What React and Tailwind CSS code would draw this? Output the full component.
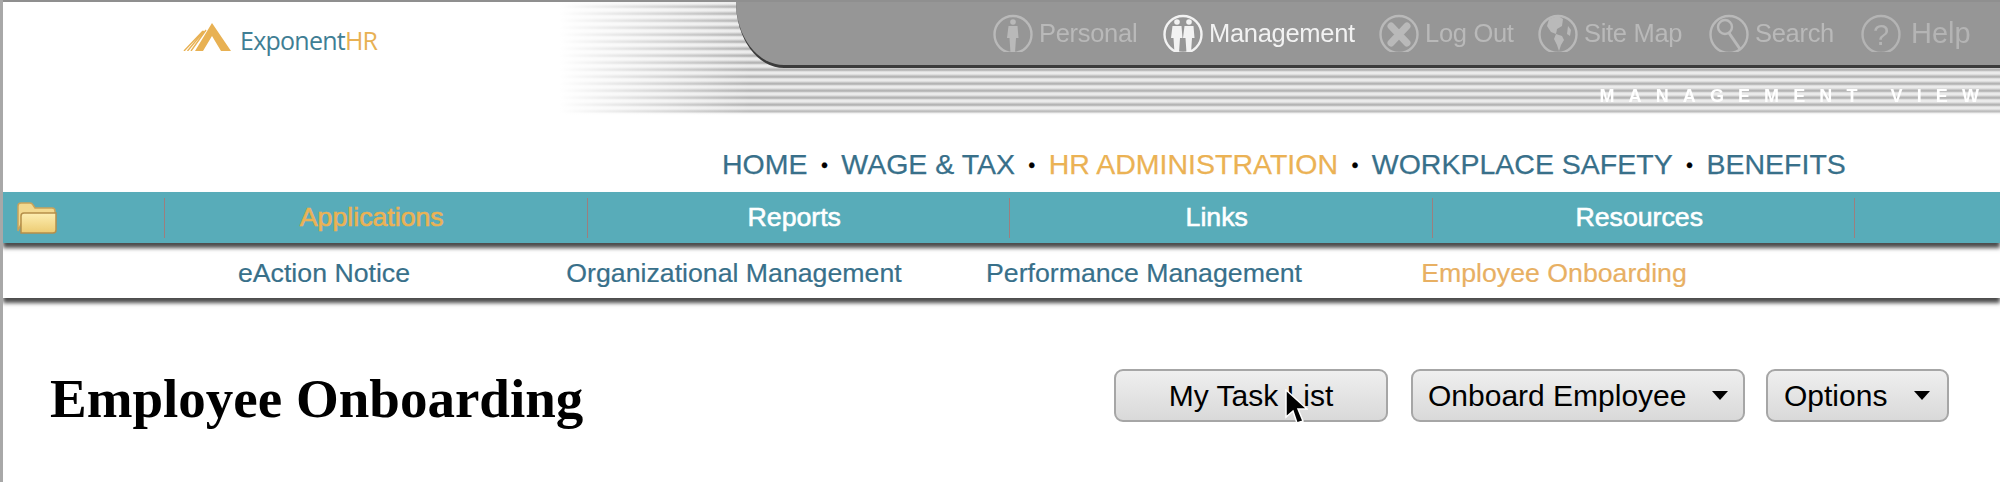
import React from 'react';

const PersonGlyph = ({ x = 20 }) => (
  <g transform={`translate(${x} 0)`} fill="currentColor" stroke="none">
    <circle cx="0" cy="8" r="2.8" />
    <path d="M-4.5 12h9l1 12h-2.5l-1 15h-4.500l-1-15h-2.500z" />
  </g>
);

const NavIcon = ({ type }) => (
  <svg viewBox="0 0 40 38" className="w-[40px] h-[38px] shrink-0">
    <circle cx="20" cy="20.500" r="18.500" fill="none" stroke="currentColor" strokeWidth="2.4" />
    {type === 'personal' && <PersonGlyph />}
    {type === 'management' && (
      <>
        <PersonGlyph x={14} />
        <PersonGlyph x={26} />
      </>
    )}
    {type === 'logout' && <path d="M12 12l16 17M28 12L12 29" stroke="currentColor" strokeWidth="7" strokeLinecap="round" />}
    {type === 'sitemap' && (
      <path
        fill="currentColor"
        d="M11 5l9-3 5 3-1 7-5 3-1 5-5-2-4-6zM18 20l6 2 2 4-3 5-2 6-2-6-3-6zM30 12l3 4-1 6-3-2z"
      />
    )}
    {type === 'search' && (
      <>
        <circle cx="16" cy="13" r="7" fill="none" stroke="currentColor" strokeWidth="2.4" />
        <path d="M20 19l11 16" stroke="currentColor" strokeWidth="3" />
      </>
    )}
    {type === 'help' && (
      <text x="20" y="31" textAnchor="middle" fontSize="29" fontFamily="'Liberation Sans', sans-serif" fill="currentColor">
        ?
      </text>
    )}
  </svg>
);

const FolderIcon = () => (
  <svg viewBox="0 0 40 32" className="w-[40px] h-[32px] shrink-0">
    <defs>
      <linearGradient id="folderFront" x1="0" y1="0" x2="0" y2="1">
        <stop offset="0" stopColor="#fdeeb2" />
        <stop offset="1" stopColor="#eccb72" />
      </linearGradient>
    </defs>
    <path d="M1 29V4q0-3 3-3h9q2 0 3 2l2 3h17q3 0 3 3v4H8z" fill="#f3d98f" stroke="#c9a35a" strokeWidth="1.5" />
    <path d="M4 31h32q3 0 3-3V11H7q-3 0-3 3z" fill="url(#folderFront)" stroke="#b58f4a" strokeWidth="1.5" />
  </svg>
);

const topLinks = [
  { label: 'Personal', type: 'personal', width: 'w-[170px]', color: 'text-[#b9b9b9]' },
  { label: 'Management', type: 'management', width: 'w-[216px]', color: 'text-[#f2f2f2]' },
  { label: 'Log Out', type: 'logout', width: 'w-[159px]', color: 'text-[#b9b9b9]' },
  { label: 'Site Map', type: 'sitemap', width: 'w-[171px]', color: 'text-[#b9b9b9]' },
  { label: 'Search', type: 'search', width: 'w-[152px]', color: 'text-[#b9b9b9]' },
];

const mainNav = [
  { label: 'HOME' },
  { label: 'WAGE & TAX' },
  { label: 'HR ADMINISTRATION', active: true },
  { label: 'WORKPLACE SAFETY' },
  { label: 'BENEFITS' },
];

const tabs = ['Applications', 'Reports', 'Links', 'Resources'];
const subItems = ['eAction Notice', 'Organizational Management', 'Performance Management', 'Employee Onboarding'];

const Caret = () => (
  <span className="w-0 h-0 border-x-[8px] border-x-transparent border-t-[9px] border-t-black" />
);

const Button = ({ width, children, className }) => (
  <button
    className={`h-[53px] flex items-center rounded-[9px] border-2 border-[#a6a6a6] bg-gradient-to-b from-[#efefef] to-[#d9d9d9] text-[30px] text-black ${width} ${className}`}
  >
    {children}
  </button>
);

const App = () => {
  return (
    <div className="relative w-[2000px] h-[482px] overflow-hidden bg-white border-l-[3px] border-[#a8a8a8] font-['Liberation_Sans',Arial,sans-serif]">
      {/* header */}
      <div className="flex h-[115px] border-t-2 border-[#8f8f8f]">
        <div className="w-[557px] flex items-start pl-[180px] pt-[21px] gap-[9px]">
          <svg viewBox="0 0 48 28" className="w-[48px] h-[28px] shrink-0">
            <path d="M29 0L48 28H38L29 13 20 28H12z" fill="#e8b153" />
            <path d="M1 28L20 8M4.500 28L21 8M8 28L23 7" stroke="#e8b153" strokeWidth="1.4" fill="none" />
          </svg>
          <span className="text-[25px] leading-[28px] mt-[3px] tracking-[-0.75px] text-[#3f7e94] font-['Open_Sans',sans-serif]">
            Exponent<span className="text-[#e8b153]">HR</span>
          </span>
        </div>
        <div className="flex-1 flex flex-col bg-[linear-gradient(to_right,#fff,rgba(255,255,255,0)_190px),linear-gradient(to_bottom,rgba(255,255,255,0)_109px,#fff_113px),repeating-linear-gradient(to_bottom,#ebebeb_0px,#ebebeb_2px,#d0d0d0_3px,#ababab_5px,#d0d0d0_6px,#ebebeb_7px)]">
          <div className="ml-[176px] h-[66px] flex items-start pl-[257px] pt-[12px] bg-[#969696] border-b-[3px] border-[#3b3b3b] rounded-bl-[48px_66px] blur-[0.6px]">
            {topLinks.map((link) => (
              <div key={link.label} className={`flex items-center gap-[6px] ${link.width} ${link.color}`}>
                <NavIcon type={link.type} />
                <span className="text-[25.5px] leading-[38px] tracking-[-0.3px] whitespace-nowrap">{link.label}</span>
              </div>
            ))}
            <div className="flex items-center gap-[10px] text-[#b4b4b4]">
              <NavIcon type="help" />
              <span className="text-[29px] leading-[36px] whitespace-nowrap">Help</span>
            </div>
          </div>
          <div className="flex justify-end pr-[7px] pt-[18px] text-[18px] leading-[20px] font-bold tracking-[14.1px] text-white blur-[0.3px] whitespace-nowrap">
            MANAGEMENT VIEW
          </div>
        </div>
      </div>

      {/* main nav */}
      <div className="flex items-center h-[77px] pl-[719px] pt-[22px] text-[28.5px] text-[#38708a] [-webkit-text-stroke:0.25px_currentColor] whitespace-nowrap">
        {mainNav.map((item, i) => (
          <React.Fragment key={item.label}>
            {i > 0 && <span className="mx-[13.4px] text-black text-[20px]">•</span>}
            <span className={item.active ? 'text-[#ebb254]' : ''}>{item.label}</span>
          </React.Fragment>
        ))}
      </div>

      {/* tab bar */}
      <div className="relative z-10 flex items-center h-[51px] bg-[#58acb9] shadow-[0_5px_4px_rgba(0,0,0,0.7)]">
        <div className="w-[162px] h-[40px] flex items-center pl-[14px] border-r border-[#9c7f7f]">
          <FolderIcon />
        </div>
        {tabs.map((tab, i) => (
          <div
            key={tab}
            className={`w-[422.500px] h-[40px] pr-[8px] flex items-center justify-center border-r border-[#9c7f7f] text-[26.7px] [-webkit-text-stroke:0.6px_currentColor] ${i === 0 ? 'text-[#ebb254]' : 'text-white'}`}
          >
            {tab}
          </div>
        ))}
      </div>

      {/* sub nav */}
      <div className="relative flex items-center h-[55px] pl-[116px] pt-[6px] bg-white shadow-[0_5px_4px_rgba(0,0,0,0.7)] text-[26.7px] text-[#38708a] [-webkit-text-stroke:0.2px_currentColor]">
        {subItems.map((item, i) => (
          <div key={item} className={`w-[410px] text-center ${i === 3 ? 'text-[#e8b063]' : ''}`}>
            {item}
          </div>
        ))}
      </div>

      {/* page heading */}
      <div className="flex items-start pt-[71px] pl-[47px]">
        <h1 className="w-[1064px] text-[55px] leading-[60px] font-bold text-black font-['Liberation_Serif',serif] whitespace-nowrap">
          Employee Onboarding
        </h1>
        <Button width="w-[274px] mr-[23px]" className="justify-center">My Task List</Button>
        <Button width="w-[334px] mr-[21px]" className="justify-between pl-[15px] pr-[15px]">
          Onboard Employee
          <Caret />
        </Button>
        <Button width="w-[183px]" className="justify-between pl-[16px] pr-[17px]">
          Options
          <Caret />
        </Button>
      </div>

      {/* mouse pointer */}
      <svg viewBox="0 0 24 36" className="absolute left-[1281px] top-[389px] w-[24px] h-[36px]">
        <path d="M2 1v27l7-6 4 12 6-2-5-12h9z" fill="#000" stroke="#fff" strokeWidth="1.5" />
      </svg>
    </div>
  );
};

export default App;
